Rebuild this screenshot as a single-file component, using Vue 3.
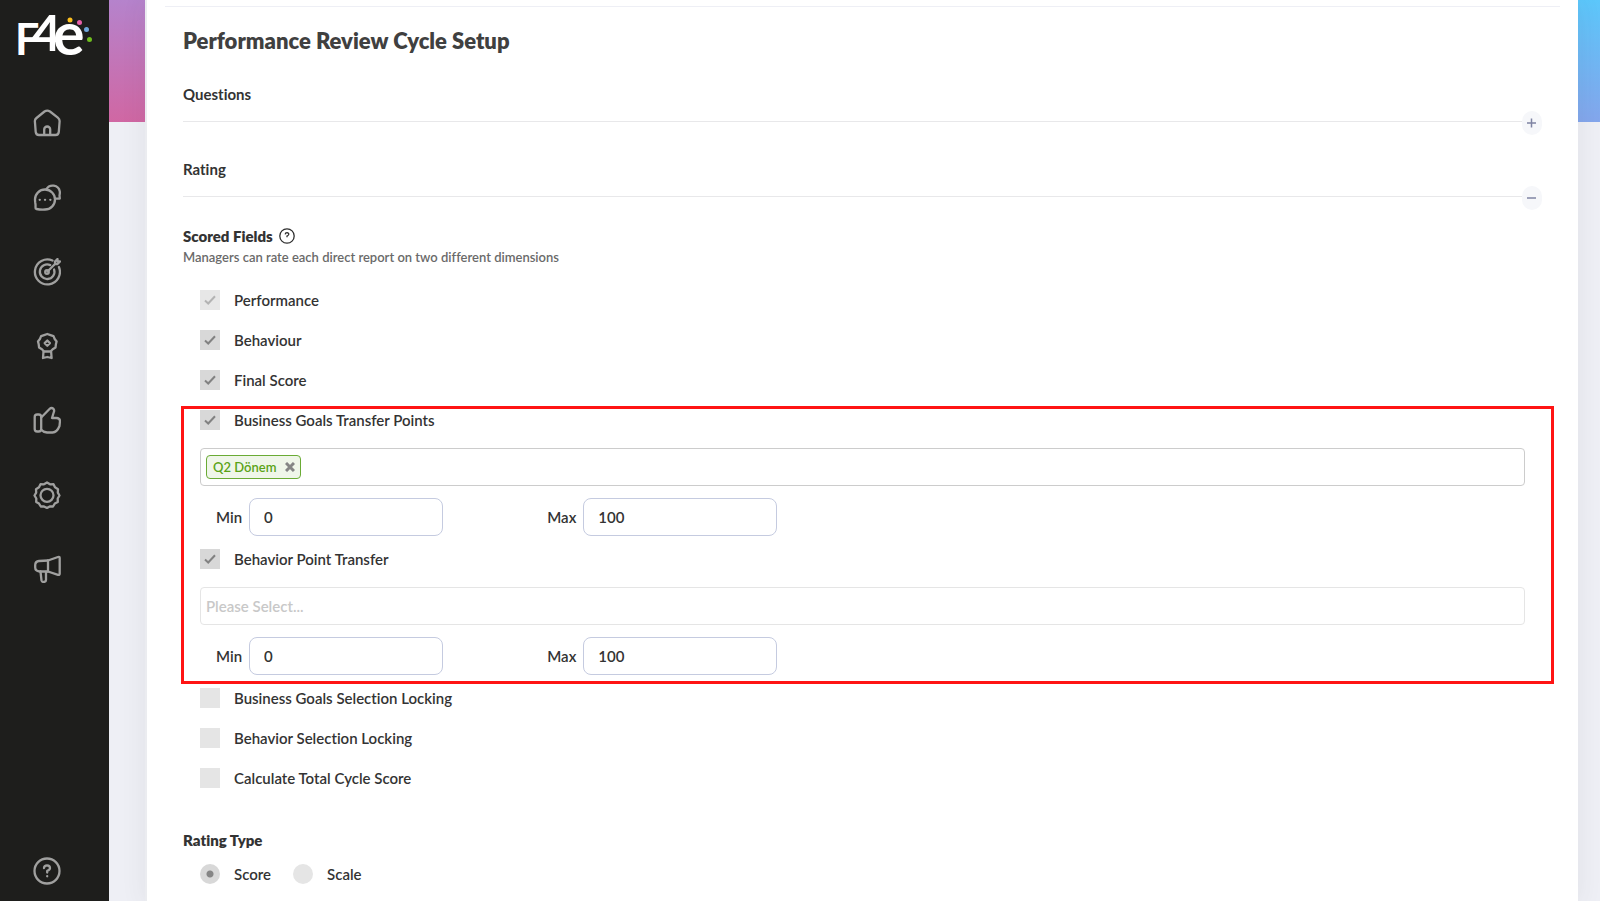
<script setup>
import { reactive, ref } from 'vue'

const menu = ['home', 'chat', 'target', 'badge', 'like', 'settings', 'announce']

const scoreFields = reactive([
    { id: 'performance', label: 'Performance', checked: true, disabled: true },
    { id: 'behaviour', label: 'Behaviour', checked: true },
    { id: 'final_score', label: 'Final Score', checked: true }
])

const transferFields = reactive([
    { id: 'goals_transfer', label: 'Business Goals Transfer Points', checked: true, tags: ['Q2 Dönem'], min: '0', max: '100' },
    { id: 'behavior_transfer', label: 'Behavior Point Transfer', checked: true, tags: [], min: '0', max: '100' }
])

const lockFields = reactive([
    { id: 'goals_locking', label: 'Business Goals Selection Locking', checked: false },
    { id: 'behavior_locking', label: 'Behavior Selection Locking', checked: false },
    { id: 'total_score', label: 'Calculate Total Cycle Score', checked: false }
])

const ratingType = ref('score')
const ratingOpen = ref(true)
const questionsOpen = ref(false)

function removeTag(field, index) {
    field.tags.splice(index, 1)
}
</script>

<template>
    <div class="page">
        <aside class="sidebar">
            <a href="#" class="logo" aria-label="F4e">
                <svg width="80" height="46" viewBox="0 0 80 46">
                    <text class="logo_text">
                        <tspan x="-3" y="43" font-size="43">F</tspan><tspan x="14" y="39" font-size="50">4</tspan><tspan x="35" y="43" font-size="59">e</tspan>
                    </text>
                    <circle cx="52" cy="8" r="2.5" fill="#fdc01f" />
                    <circle cx="61.5" cy="10.5" r="2.5" fill="#e85fa8" />
                    <circle cx="68.5" cy="17.5" r="2.5" fill="#6fa8dc" />
                    <circle cx="71.5" cy="27.5" r="2.5" fill="#6fbe1e" />
                </svg>
            </a>
            <nav class="menu">
                <a v-for="item in menu" :key="item" href="#" :aria-label="item">
                    <svg class="icon" viewBox="0 0 28 28">
                        <g v-if="item == 'home'">
                            <path d="M3.5 9 L11.500 2.500 Q14.200 .8 17 2.500 L24.800 8.700 Q26.800 10.300 26.600 12.500 L25.800 22.800 Q25.500 26 22.500 26 H6 Q3 26 2.700 22.800 L1.900 12.500 Q1.700 10.500 3.500 9 Z" />
                            <path d="M11.200 25.500 V20.500 a3 3 0 0 1 6 0 V25.500" />
                        </g>
                        <g v-else-if="item == 'chat'">
                            <path d="M2 16.300 A10 10 0 1 1 12 26.500 Q7 26.700 3.500 26 Q2.300 25.800 2.500 24.500 Q2.800 22.500 2.300 20 Q2 18 2 16.300 Z" />
                            <path d="M13.300 6.300 A7.300 7.300 0 0 1 26.800 8.500 Q27 10.500 26.500 12.500 L26.800 15.500 L22.300 15.700" />
                            <path d="M6.700 16.800 h.1 M12 16.800 h.1 M17.300 16.800 h.1" />
                        </g>
                        <g v-else-if="item == 'target'">
                            <path d="M19.500 2.500 A12.500 12.500 0 1 0 25.900 9" />
                            <path d="M17.200 7.100 A7.300 7.300 0 1 0 21.100 11.500" />
                            <circle cx="14" cy="14" r="1.800" />
                            <path d="M14.500 13.500 L22 6 M22 6 V3.500 L24.500 1 V3.500 H27 L24.500 6 Z" />
                        </g>
                        <g v-else-if="item == 'badge'">
                            <path d="M14.300 2 L17.500 3.100 L20.500 4.100 L21.700 7 L23.600 9.500 L22.900 12.300 L22.500 15.500 L19.700 17.300 L17.500 19.500 H11.100 L8.900 17.300 L6.100 15.500 L5.700 12.300 L5 9.500 L6.900 7 L8.100 4.100 L11.100 3.100 Z" />
                            <path d="M14.300 8.500 l2.600 2.600 -2.600 2.600 -2.600 -2.600 Z" />
                            <path d="M10.500 19.500 L10 26 L14.300 25 L18.600 26 L18.100 19.500" />
                        </g>
                        <g v-else-if="item == 'like'">
                            <rect x="1.700" y="8.500" width="6.500" height="17" rx="2.500" />
                            <path d="M8.200 11.500 L16.500 3 Q18.500 1 20.500 2.800 Q21.700 4.500 20.700 6.500 L19 12 H23.500 Q27 12.300 27 15 L26.500 20 Q24 26.300 19.500 26.500 H14 Q10 26 8.200 23.800" />
                        </g>
                        <g v-else-if="item == 'settings'">
                            <path d="M14 1.500 L17 3.300 L20.500 3.200 L22 6.300 L25 8.200 L24.800 11.600 L26.500 14.500 L24.700 17.500 L24.800 21 L21.800 22.600 L20 25.500 L16.700 25.400 L14 27 L11 25.400 L7.800 25.500 L6 22.600 L3.200 21 L3.300 17.500 L1.500 14.500 L3.200 11.600 L3 8.200 L6 6.300 L7.500 3.200 L11 3.300 Z" />
                            <circle cx="14" cy="14.300" r="6.500" />
                        </g>
                        <g v-else>
                            <path d="M15 5.500 L25 2 Q26.700 1.500 26.700 3.200 V18.500 Q26.700 20.300 25 19.800 L15 16.500 H6.500 Q2.200 16 2.200 12.500 V10 Q2.300 6.500 6 6 Z" />
                            <path d="M15 5.500 V16.500 M7.500 16.500 L8.500 25.500 Q9 27 10.800 27 Q13 26.800 13 25 V16.800" />
                        </g>
                    </svg>
                </a>
            </nav>
            <a href="#" class="help" aria-label="Help">
                <svg class="icon" viewBox="0 0 28 28">
                    <circle cx="14" cy="14" r="12.500" />
                    <path d="M11 11 Q11.200 8.300 14 8.300 Q17 8.400 17 11 Q17 12.800 14.200 13.800 V15.500 M14.200 19.200 v.1" />
                </svg>
            </a>
        </aside>

        <div class="banner"></div>

        <main class="card">
            <hr>
            <h1>Performance Review Cycle Setup</h1>

            <section class="accordion">
                <h2>Questions</h2>
                <div class="divider">
                    <button type="button" aria-label="Toggle questions" @click="questionsOpen = !questionsOpen">
                        <svg width="10" height="10" viewBox="0 0 10 10"><path :d="questionsOpen ? 'M0 5 H9' : 'M0 5 H9 M4.500 0.500 V9.500'" /></svg>
                    </button>
                </div>
            </section>

            <section class="accordion">
                <h2>Rating</h2>
                <div class="divider">
                    <button type="button" aria-label="Toggle rating" @click="ratingOpen = !ratingOpen">
                        <svg width="10" height="10" viewBox="0 0 10 10"><path :d="ratingOpen ? 'M0 5 H9' : 'M0 5 H9 M4.500 0.500 V9.500'" /></svg>
                    </button>
                </div>
            </section>

            <div v-if="ratingOpen">
                <h3 class="scored_title">
                    Scored Fields
                    <svg width="16" height="16" viewBox="0 0 16 16">
                        <circle cx="8" cy="8" r="7.200" />
                        <path d="M6.200 6.400 Q6.300 4.700 8 4.700 Q9.900 4.800 9.800 6.300 Q9.700 7.400 8 8 V9.200 M8 11.200 v.1" />
                    </svg>
                </h3>
                <p class="description">Managers can rate each direct report on two different dimensions</p>

                <div class="fields">
                    <label v-for="field in scoreFields" :key="field.id" class="option">
                        <input type="checkbox" v-model="field.checked" :disabled="field.disabled">
                        {{ field.label }}
                    </label>

                    <div class="highlight">
                        <div v-for="field in transferFields" :key="field.id" class="transfer">
                            <label class="option">
                                <input type="checkbox" v-model="field.checked">
                                {{ field.label }}
                            </label>
                            <div class="multiselect" :class="{ empty: !field.tags.length }">
                                <span v-for="(tag, index) in field.tags" :key="tag" class="tag">
                                    {{ tag }}
                                    <button type="button" :aria-label="'Remove ' + tag" @click="removeTag(field, index)">
                                        <svg width="10" height="10" viewBox="0 0 10 10"><path d="M1 1 L9 9 M9 1 L1 9" /></svg>
                                    </button>
                                </span>
                                <input type="text" :aria-label="field.label" :placeholder="field.tags.length ? '' : 'Please Select...'">
                            </div>
                            <div class="range">
                                <div class="range_item">
                                    <label :for="field.id + '_min'">Min</label>
                                    <input :id="field.id + '_min'" v-model="field.min" type="text">
                                </div>
                                <div class="range_item">
                                    <label :for="field.id + '_max'">Max</label>
                                    <input :id="field.id + '_max'" v-model="field.max" type="text">
                                </div>
                            </div>
                        </div>
                    </div>

                    <label v-for="field in lockFields" :key="field.id" class="option">
                        <input type="checkbox" v-model="field.checked">
                        {{ field.label }}
                    </label>
                </div>

                <h3>Rating Type</h3>
                <div class="radios">
                    <label><input type="radio" value="score" v-model="ratingType">Score</label>
                    <label><input type="radio" value="scale" v-model="ratingType">Scale</label>
                </div>
            </div>
        </main>
    </div>
</template>

<style>
body {
    margin: 0;
    background-color: #eeeff5;
}
</style>

<style scoped>
.page {
    position: relative;
    display: flex;
    min-height: 100vh;
    box-sizing: border-box;
    padding-right: 22px;
    color: #333333;
    font-family: Lato, "Liberation Sans", sans-serif;
    font-size: 15px;
    font-weight: 600;
    font-variant-ligatures: none;
    line-height: 20px;
}

.sidebar {
    position: sticky;
    top: 0;
    display: flex;
    flex-direction: column;
    flex: none;
    box-sizing: border-box;
    width: 109px;
    height: 100vh;
    padding: 12px 0 16px 18px;
    background-color: #1e1e1c;
    z-index: 2;
}

.logo {
    height: 46px;
}

.logo svg {
    display: block;
    overflow: visible;
}

.logo_text {
    fill: #ffffff;
    font-family: Lato, sans-serif;
    font-weight: 700;
}

.menu {
    display: flex;
    flex-direction: column;
    justify-content: space-between;
    height: 474px;
    margin: 51px 0 auto 15px;
}

.menu a,
.help {
    width: 28px;
    height: 28px;
}

.help {
    margin-left: 15px;
}

.icon {
    display: block;
    width: 28px;
    height: 28px;
    fill: none;
    stroke: #a0a09f;
    stroke-width: 2.3;
    stroke-linecap: round;
    stroke-linejoin: round;
}

.banner {
    position: absolute;
    top: 0;
    left: 109px;
    right: 0;
    height: 122px;
    background:
        linear-gradient(#b583cc, #d067a3) left / 50% 100% no-repeat,
        linear-gradient(#5cc7fb, #84a6ec) right / 50% 100% no-repeat;
}

.card {
    position: relative;
    flex: 1;
    min-width: 0;
    box-sizing: border-box;
    margin-left: 36px;
    padding: 6px 36px 20px;
    border-left: 2px solid #ebecf0;
    background-color: #ffffff;
    box-shadow: 0 0 24px rgba(60, 60, 70, 0.08);
}

hr {
    height: 1px;
    margin: 0 -18px;
    border: 0;
    background-color: #eeeff5;
}

h1,
h2,
h3,
p {
    margin: 0;
}

h1 {
    margin: 20px 0 29px;
    color: #404040;
    font-size: 22px;
    font-weight: 800;
    line-height: 28px;
}

h2,
h3 {
    font-size: 15px;
    line-height: 20px;
}

h2 {
    font-weight: 700;
}

h3 {
    font-weight: 800;
}

.accordion {
    margin-bottom: 24px;
}

.divider {
    display: flex;
    align-items: flex-start;
    margin-top: 7px;
}

.divider::before {
    content: "";
    flex: 1;
    height: 1px;
    margin-top: 10px;
    background-color: #e8e8ea;
}

.divider button {
    display: flex;
    align-items: center;
    justify-content: center;
    width: 20px;
    height: 24px;
    padding: 0;
    border: 0;
    border-radius: 10px;
    background-color: #f6f7fa;
}

.divider path {
    stroke: #7f84a3;
    stroke-width: 1.5;
}

.scored_title {
    display: flex;
    align-items: center;
    gap: 6px;
    margin-top: -8px;
}

.scored_title svg {
    fill: none;
    stroke: #2f2f2f;
    stroke-width: 1.3;
}

.description {
    margin: 2px 0 14px;
    color: #6a6a6a;
    font-size: 13px;
    line-height: 18px;
}

.fields {
    margin: 0 17px 32px;
}

.option {
    display: flex;
    align-items: center;
    gap: 14px;
    height: 40px;
}

input {
    font: inherit;
    color: inherit;
}

input[type="checkbox"],
input[type="radio"] {
    appearance: none;
    flex: none;
    width: 20px;
    height: 20px;
    margin: 0;
    background: #e5e5e5 center no-repeat;
}

input[type="checkbox"]:checked {
    background-color: #d8d8d8;
    background-image: url("data:image/svg+xml,%3Csvg xmlns='http://www.w3.org/2000/svg' width='12' height='10' viewBox='0 0 12 10'%3E%3Cpath d='M1 5.500 L4.200 8.500 L11 1.200' fill='none' stroke='%23828282' stroke-width='2'/%3E%3C/svg%3E");
}

input[type="checkbox"]:disabled {
    opacity: 0.6;
}

input[type="radio"] {
    border-radius: 50%;
}

input[type="radio"]:checked {
    background: radial-gradient(circle, #858585 3px, #d8d8d8 4px);
}

/* red frame drawn around both transfer blocks */
.highlight {
    position: relative;
}

.highlight::after {
    content: "";
    position: absolute;
    top: 6px;
    right: -29px;
    bottom: -6px;
    left: -19px;
    border: 3px solid #ff1414;
    pointer-events: none;
}

.transfer {
    padding-bottom: 3px;
}

.multiselect {
    display: flex;
    align-items: center;
    box-sizing: border-box;
    height: 38px;
    margin: 8px 0 12px;
    padding: 0 5px;
    border: 1px solid #cccccc;
    border-radius: 4px;
}

.multiselect.empty {
    border-color: #e5e5e5;
}

.multiselect input {
    flex: 1;
    min-width: 0;
    padding: 0;
    border: 0;
    outline: 0;
    background: none;
}

.multiselect input::placeholder {
    color: #c8c8c8;
    opacity: 1;
}

.tag {
    display: flex;
    align-items: center;
    gap: 9px;
    box-sizing: border-box;
    height: 24px;
    padding: 0 5px 0 6px;
    border: 1px solid #6aab35;
    border-radius: 4px;
    background-color: #eff6e9;
    color: #5ba317;
    font-size: 13px;
}

.tag button {
    display: flex;
    padding: 0;
    border: 0;
    background: none;
}

.tag path {
    stroke: #858585;
    stroke-width: 3;
}

.range {
    display: grid;
    grid-template-columns: repeat(4, 1fr);
}

.range_item {
    display: flex;
    align-items: center;
    gap: 7px;
    padding-left: 16px;
}

.range_item input {
    box-sizing: border-box;
    width: 194px;
    height: 38px;
    padding: 0 14px;
    border: 1px solid #c5cbe0;
    border-radius: 8px;
    background-color: #ffffff;
}

.radios {
    display: flex;
    gap: 22px;
    margin: 14px 17px 0;
}

.radios label {
    display: flex;
    align-items: center;
    gap: 14px;
}
</style>
